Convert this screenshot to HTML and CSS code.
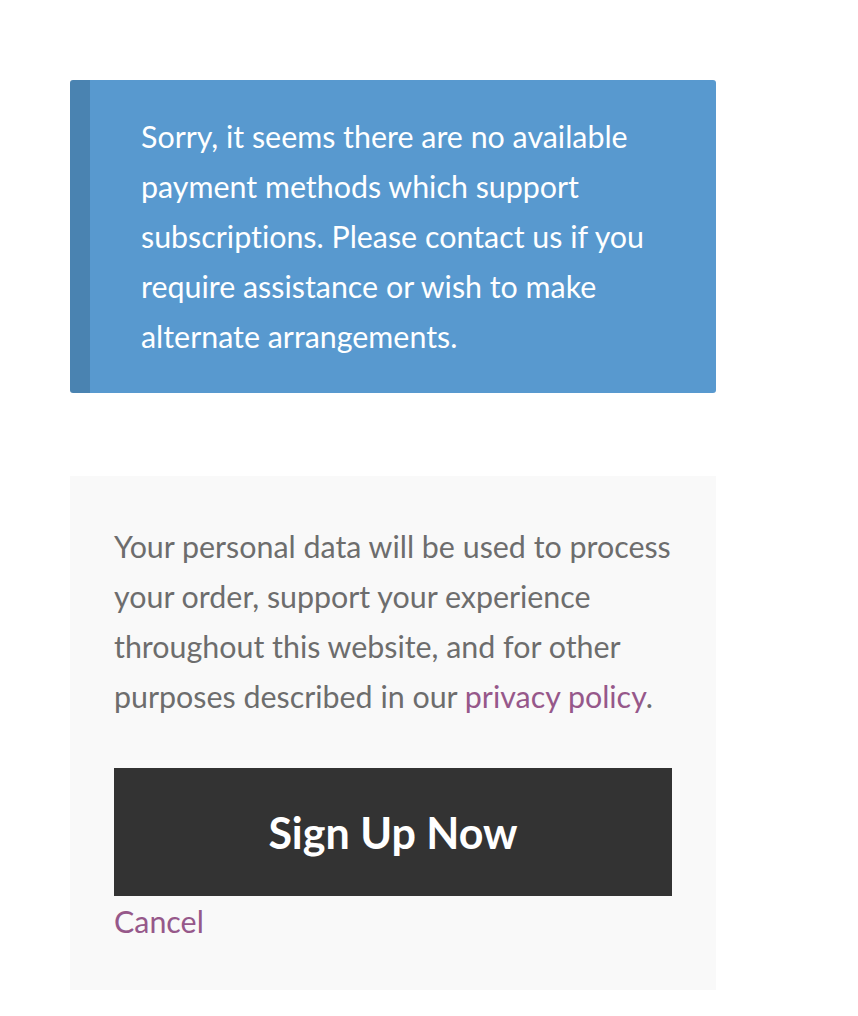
FILE: index.html
```html
<!DOCTYPE html>
<html>
	<head>
		<meta charset="UTF-8">
		<title>Sign Up</title>
		<link rel="stylesheet" href="styles.css">
	</head>
	<body>
		<main>
			<div class="notice">
				Sorry, it seems there are no available payment methods which support subscriptions. Please contact us if you require assistance or wish to make alternate arrangements.
			</div>

			<form class="checkout">
				<p class="privacy">
					Your personal data will be used to process your order, support your experience throughout this website, and for other purposes described in our <a href="#">privacy policy</a>.
				</p>
				<button type="submit">Sign Up Now</button>
				<a href="#" class="cancel">Cancel</a>
			</form>
		</main>
	</body>
</html>
```

FILE: styles.css
```css
body {
    font-family: Lato, "Noto Sans", sans-serif;
    font-size: 30.4px;
    line-height: 50px;
    font-variant-ligatures: none;
    margin: 0; padding: 0;
    background: #ffffff;
}

main {
    width: 646px;
    padding: 80px 0 0 70px;
    display: flex; flex-direction: column;
    gap: 83px;
}

.notice {
    background-color: #5899cf;
    border-left: 20px solid #4a83b1;
    border-radius: 3px;
    color: #ffffff;
    padding: 31px 51px 32px 51px;
}

.checkout {
    background-color: #f9f9f9;
    padding: 45px 44px 44px 44px;
    display: flex; flex-direction: column;
    align-items: flex-start;
}

p.privacy {
    margin: 0 0 47px 0;
    color: #6d6d6d;
}

a {
    color: #96588a;
    text-decoration: none;
}

button {
    width: 100%;
    height: 128px;
    border: 0;
    border-radius: 0;
    background-color: #333333;
    color: #ffffff;
    font-family: inherit;
    font-size: 43px;
    font-weight: 700;
    cursor: pointer;
}
```
